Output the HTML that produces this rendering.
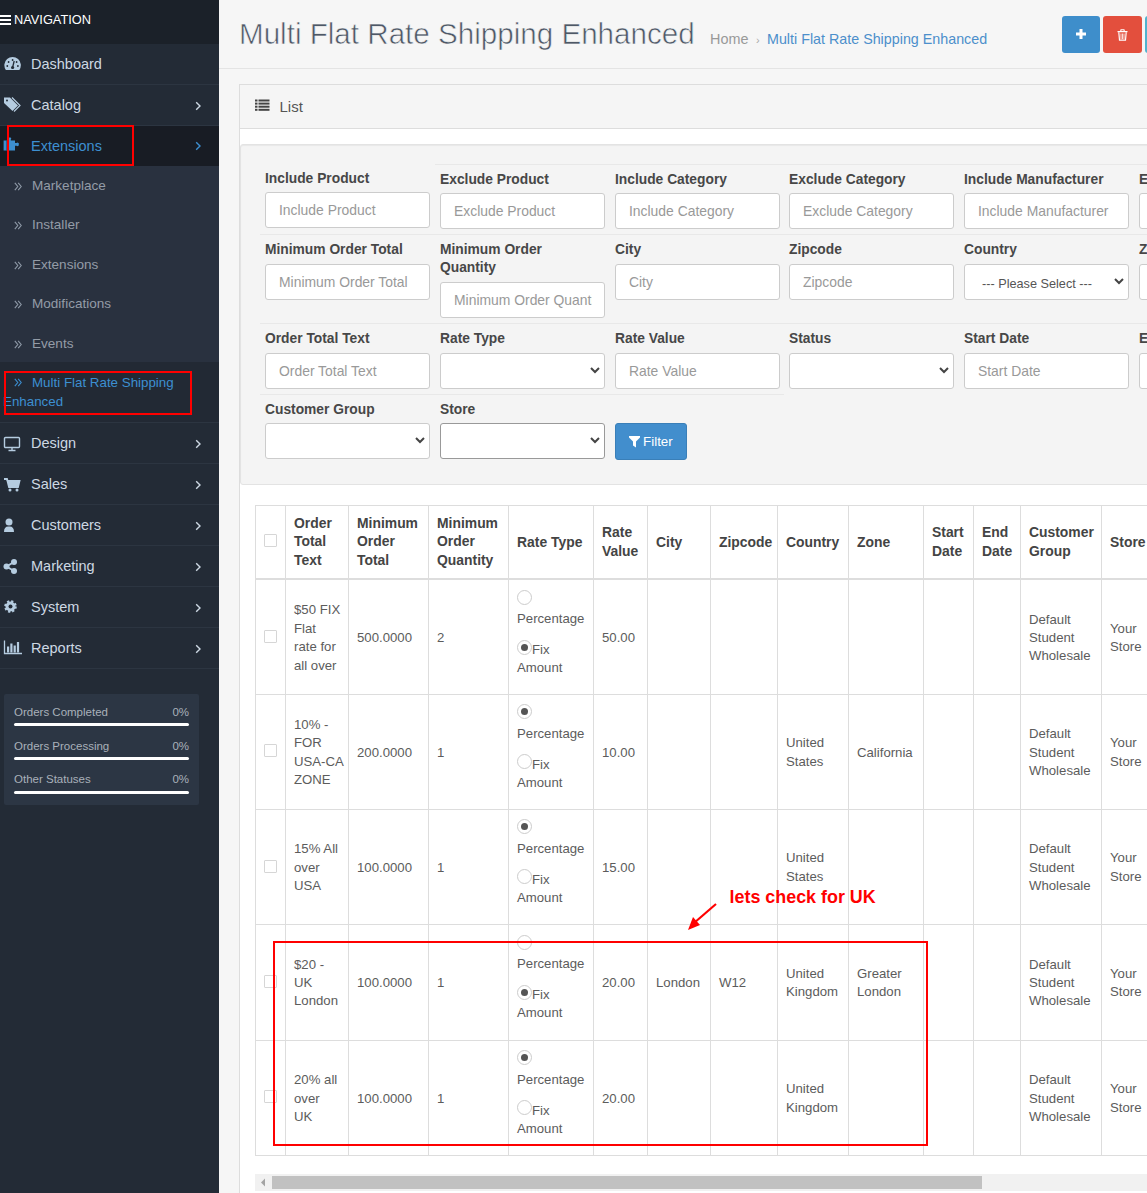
<!DOCTYPE html>
<html><head><meta charset="utf-8"><title>Multi Flat Rate Shipping Enhanced</title>
<style>
html,body{margin:0;padding:0;width:1147px;height:1193px;overflow:hidden;background:#f6f6f6;font-family:"Liberation Sans",sans-serif;}
.r{position:absolute;}
.t{position:absolute;white-space:nowrap;}
</style></head><body>
<div class="r" style="left:0px;top:0px;width:219px;height:1193px;background:#232b36"></div>
<div class="r" style="left:0px;top:0px;width:219px;height:44px;background:#1b2129"></div>
<div class="r" style="left:0px;top:15px;width:11px;height:2px;background:#fff"></div>
<div class="r" style="left:0px;top:19px;width:11px;height:2px;background:#fff"></div>
<div class="r" style="left:0px;top:23px;width:11px;height:2px;background:#fff"></div>
<div class="t" style="left:14px;top:11.10px;font-size:12.8px;line-height:17.92px;color:#fff;">NAVIGATION</div>
<div class="r" style="left:0px;top:84px;width:219px;height:1px;background:#2c3541"></div>
<div class="t" style="left:31px;top:54.33px;font-size:14.5px;line-height:20.3px;color:#cdd8e3;">Dashboard</div>
<svg class="r" style="left:3px;top:56px" width="20" height="17" viewBox="0 0 20 17"><path d="M2.25 14 A8.25 8.25 0 1 1 15.75 14 Z" transform="translate(0.6,0)" fill="#b5cce0"/><circle cx="9.6" cy="11.5" r="1.6" fill="#232b36"/><path d="M9.6 11.5 L11.2 5" stroke="#232b36" stroke-width="1.3"/><circle cx="4.3" cy="10" r="0.9" fill="#232b36"/><circle cx="5.6" cy="6" r="0.9" fill="#232b36"/><circle cx="9.6" cy="4" r="0.9" fill="#232b36"/><circle cx="14.9" cy="10" r="0.9" fill="#232b36"/><circle cx="13.6" cy="6" r="0.9" fill="#232b36"/></svg>
<div class="r" style="left:0px;top:125px;width:219px;height:1px;background:#2c3541"></div>
<div class="t" style="left:31px;top:95.33px;font-size:14.5px;line-height:20.3px;color:#cdd8e3;">Catalog</div>
<svg class="r" style="left:195px;top:101px" width="7" height="10" viewBox="0 0 7 10"><path d="M1.2 1.2 L5 5 L1.2 8.8" stroke="#cdd8e3" stroke-width="1.4" fill="none"/></svg>
<svg class="r" style="left:3px;top:97px" width="20" height="17" viewBox="0 0 20 17"><path d="M1 0.5 L7 0.5 L15 8.5 L9.5 14 L1 6 Z" fill="#b5cce0"/><path d="M9 0.5 L17 8.5 L11 14.5" stroke="#b5cce0" stroke-width="1.2" fill="none"/><circle cx="4" cy="3.5" r="1" fill="#232b36"/></svg>
<div class="r" style="left:0px;top:126px;width:219px;height:40px;background:#181c24"></div>
<div class="t" style="left:31px;top:136.33px;font-size:14.5px;line-height:20.3px;color:#3d8fd1;">Extensions</div>
<svg class="r" style="left:195px;top:141px" width="7" height="10" viewBox="0 0 7 10"><path d="M1.2 1.2 L5 5 L1.2 8.8" stroke="#3d8fd1" stroke-width="1.4" fill="none"/></svg>
<svg class="r" style="left:3px;top:137px" width="18" height="17" viewBox="0 0 18 17"><path d="M0.6 3.5 L6 3.5 L6 2.5 L5.5 1.5 L6.2 0.4 L7.6 0.4 L8.3 1.5 L7.8 2.5 L7.8 3.5 L12 3.5 L12 6 L13.5 6 L14.5 5.5 L15.8 6.2 L15.8 8.5 L14.5 9.2 L13.5 8.7 L12 8.7 L12 13.5 L0.6 13.5 Z" fill="#3d8fd1"/><path d="M4 3.5 L4 13.5" stroke="#1a1f27" stroke-width="0.8"/></svg>
<div class="r" style="left:0px;top:166px;width:219px;height:196px;background:#29313f"></div>
<svg class="r" style="left:14px;top:182px" width="9" height="9" viewBox="0 0 9 9"><path d="M0.8 0.8 L3.8 4.5 L0.8 8.2 M4.2 0.8 L7.2 4.5 L4.2 8.2" stroke="#8f9aa8" stroke-width="1.1" fill="none"/></svg>
<div class="t" style="left:32px;top:177.32px;font-size:13.55px;line-height:18.97px;color:#949ca7;">Marketplace</div>
<svg class="r" style="left:14px;top:221px" width="9" height="9" viewBox="0 0 9 9"><path d="M0.8 0.8 L3.8 4.5 L0.8 8.2 M4.2 0.8 L7.2 4.5 L4.2 8.2" stroke="#8f9aa8" stroke-width="1.1" fill="none"/></svg>
<div class="t" style="left:32px;top:216.32px;font-size:13.55px;line-height:18.97px;color:#949ca7;">Installer</div>
<svg class="r" style="left:14px;top:260.5px" width="9" height="9" viewBox="0 0 9 9"><path d="M0.8 0.8 L3.8 4.5 L0.8 8.2 M4.2 0.8 L7.2 4.5 L4.2 8.2" stroke="#8f9aa8" stroke-width="1.1" fill="none"/></svg>
<div class="t" style="left:32px;top:255.82px;font-size:13.55px;line-height:18.97px;color:#949ca7;">Extensions</div>
<svg class="r" style="left:14px;top:300px" width="9" height="9" viewBox="0 0 9 9"><path d="M0.8 0.8 L3.8 4.5 L0.8 8.2 M4.2 0.8 L7.2 4.5 L4.2 8.2" stroke="#8f9aa8" stroke-width="1.1" fill="none"/></svg>
<div class="t" style="left:32px;top:295.32px;font-size:13.55px;line-height:18.97px;color:#949ca7;">Modifications</div>
<svg class="r" style="left:14px;top:339.5px" width="9" height="9" viewBox="0 0 9 9"><path d="M0.8 0.8 L3.8 4.5 L0.8 8.2 M4.2 0.8 L7.2 4.5 L4.2 8.2" stroke="#8f9aa8" stroke-width="1.1" fill="none"/></svg>
<div class="t" style="left:32px;top:334.82px;font-size:13.55px;line-height:18.97px;color:#949ca7;">Events</div>
<div class="r" style="left:0px;top:362px;width:219px;height:61px;background:#222934"></div>
<svg class="r" style="left:14px;top:378px" width="9" height="9" viewBox="0 0 9 9"><path d="M0.8 0.8 L3.8 4.5 L0.8 8.2 M4.2 0.8 L7.2 4.5 L4.2 8.2" stroke="#3d8fd1" stroke-width="1.1" fill="none"/></svg>
<div class="t" style="left:32px;top:373.53px;font-size:13.35px;line-height:18.69px;color:#3d8fd1;">Multi Flat Rate Shipping</div>
<div class="t" style="left:3px;top:393.23px;font-size:13.35px;line-height:18.69px;color:#3d8fd1;">Enhanced</div>
<div class="r" style="left:0px;top:422px;width:219px;height:1px;background:#2c3541"></div>
<div class="r" style="left:0px;top:463px;width:219px;height:1px;background:#2c3541"></div>
<div class="t" style="left:31px;top:433.33px;font-size:14.5px;line-height:20.3px;color:#cdd8e3;">Design</div>
<svg class="r" style="left:195px;top:439px" width="7" height="10" viewBox="0 0 7 10"><path d="M1.2 1.2 L5 5 L1.2 8.8" stroke="#cdd8e3" stroke-width="1.4" fill="none"/></svg>
<svg class="r" style="left:3px;top:435px" width="20" height="17" viewBox="0 0 20 17"><rect x="1.5" y="2.5" width="15" height="10" rx="1" stroke="#b5cce0" stroke-width="1.4" fill="none"/><path d="M9 12.5 L9 15 M5.5 15.5 L12.5 15.5" stroke="#b5cce0" stroke-width="1.4"/></svg>
<div class="r" style="left:0px;top:504px;width:219px;height:1px;background:#2c3541"></div>
<div class="t" style="left:31px;top:474.33px;font-size:14.5px;line-height:20.3px;color:#cdd8e3;">Sales</div>
<svg class="r" style="left:195px;top:480px" width="7" height="10" viewBox="0 0 7 10"><path d="M1.2 1.2 L5 5 L1.2 8.8" stroke="#cdd8e3" stroke-width="1.4" fill="none"/></svg>
<svg class="r" style="left:3px;top:476px" width="20" height="17" viewBox="0 0 20 17"><path d="M1 3 L4 3 L6 11 L15 11 L16.5 5 L5 5" stroke="#b5cce0" stroke-width="1.8" fill="#b5cce0"/><circle cx="7" cy="14" r="1.5" fill="#b5cce0"/><circle cx="14" cy="14" r="1.5" fill="#b5cce0"/></svg>
<div class="r" style="left:0px;top:545px;width:219px;height:1px;background:#2c3541"></div>
<div class="t" style="left:31px;top:515.33px;font-size:14.5px;line-height:20.3px;color:#cdd8e3;">Customers</div>
<svg class="r" style="left:195px;top:521px" width="7" height="10" viewBox="0 0 7 10"><path d="M1.2 1.2 L5 5 L1.2 8.8" stroke="#cdd8e3" stroke-width="1.4" fill="none"/></svg>
<svg class="r" style="left:3px;top:517px" width="20" height="17" viewBox="0 0 20 17"><circle cx="6" cy="5" r="3.5" fill="#b5cce0"/><path d="M1 15 Q1 9 6 9.5 Q11 9 11 15 Z" fill="#b5cce0"/></svg>
<div class="r" style="left:0px;top:586px;width:219px;height:1px;background:#2c3541"></div>
<div class="t" style="left:31px;top:556.33px;font-size:14.5px;line-height:20.3px;color:#cdd8e3;">Marketing</div>
<svg class="r" style="left:195px;top:562px" width="7" height="10" viewBox="0 0 7 10"><path d="M1.2 1.2 L5 5 L1.2 8.8" stroke="#cdd8e3" stroke-width="1.4" fill="none"/></svg>
<svg class="r" style="left:3px;top:558px" width="20" height="17" viewBox="0 0 20 17"><circle cx="3.5" cy="8.5" r="3" fill="#b5cce0"/><circle cx="11" cy="4" r="3" fill="#b5cce0"/><circle cx="11" cy="13" r="3" fill="#b5cce0"/><path d="M3.5 8.5 L11 4 M3.5 8.5 L11 13" stroke="#b5cce0" stroke-width="2"/></svg>
<div class="r" style="left:0px;top:627px;width:219px;height:1px;background:#2c3541"></div>
<div class="t" style="left:31px;top:597.33px;font-size:14.5px;line-height:20.3px;color:#cdd8e3;">System</div>
<svg class="r" style="left:195px;top:603px" width="7" height="10" viewBox="0 0 7 10"><path d="M1.2 1.2 L5 5 L1.2 8.8" stroke="#cdd8e3" stroke-width="1.4" fill="none"/></svg>
<svg class="r" style="left:3px;top:599px" width="20" height="17" viewBox="0 0 20 17"><circle cx="7.5" cy="7.5" r="5" fill="#b5cce0" stroke="#b5cce0" stroke-width="2.6" stroke-dasharray="2.1 1.83"/><circle cx="7.5" cy="7.5" r="2" fill="#232b36"/></svg>
<div class="r" style="left:0px;top:668px;width:219px;height:1px;background:#2c3541"></div>
<div class="t" style="left:31px;top:638.33px;font-size:14.5px;line-height:20.3px;color:#cdd8e3;">Reports</div>
<svg class="r" style="left:195px;top:644px" width="7" height="10" viewBox="0 0 7 10"><path d="M1.2 1.2 L5 5 L1.2 8.8" stroke="#cdd8e3" stroke-width="1.4" fill="none"/></svg>
<svg class="r" style="left:3px;top:640px" width="20" height="17" viewBox="0 0 20 17"><path d="M1.5 0.5 L1.5 13.5 L19 13.5" stroke="#b5cce0" stroke-width="1.3" fill="none"/><rect x="4" y="6.5" width="2.2" height="6" fill="#b5cce0"/><rect x="7.3" y="3.5" width="2.2" height="9" fill="#b5cce0"/><rect x="10.6" y="5.5" width="2.2" height="7" fill="#b5cce0"/><rect x="13.9" y="2" width="2.2" height="10.5" fill="#b5cce0"/></svg>
<div class="r" style="left:4px;top:694px;width:195px;height:111px;background:#2c3644;border-radius:2px"></div>
<div class="t" style="left:14px;top:704.47px;font-size:11.5px;line-height:16.1px;color:#a9b1ba;">Orders Completed</div>
<div class="t" style="left:189px;top:704.47px;font-size:11.5px;line-height:16.1px;color:#a9b1ba;transform:translateX(-100%);">0%</div>
<div class="r" style="left:14px;top:723px;width:175px;height:3px;background:#fff;border-radius:2px"></div>
<div class="t" style="left:14px;top:737.97px;font-size:11.5px;line-height:16.1px;color:#a9b1ba;">Orders Processing</div>
<div class="t" style="left:189px;top:737.97px;font-size:11.5px;line-height:16.1px;color:#a9b1ba;transform:translateX(-100%);">0%</div>
<div class="r" style="left:14px;top:757px;width:175px;height:3px;background:#fff;border-radius:2px"></div>
<div class="t" style="left:14px;top:771.47px;font-size:11.5px;line-height:16.1px;color:#a9b1ba;">Other Statuses</div>
<div class="t" style="left:189px;top:771.47px;font-size:11.5px;line-height:16.1px;color:#a9b1ba;transform:translateX(-100%);">0%</div>
<div class="r" style="left:14px;top:791px;width:175px;height:3px;background:#fff;border-radius:2px"></div>
<div class="r" style="left:219px;top:0px;width:928px;height:1193px;background:#f6f6f6"></div>
<div class="r" style="left:219px;top:68px;width:928px;height:1px;background:#e4e4e4"></div>
<div class="t" style="left:239px;top:12.72px;font-size:29.6px;line-height:41.44px;color:#4e5866;-webkit-text-stroke:0.6px #f6f6f6;">Multi Flat Rate Shipping Enhanced</div>
<div class="t" style="left:710px;top:29.03px;font-size:14.4px;line-height:20.16px;color:#999;">Home</div>
<div class="t" style="left:756px;top:33.49px;font-size:11px;line-height:15.4px;color:#aaa;">&rsaquo;</div>
<div class="t" style="left:767px;top:29.14px;font-size:14.3px;line-height:20.02px;color:#4c8fcb;">Multi Flat Rate Shipping Enhanced</div>
<div class="r" style="left:1062px;top:16px;width:38px;height:37px;background:#3e8ecb;border-radius:3px"></div>
<svg class="r" style="left:1074px;top:27px" width="14" height="14" viewBox="0 0 14 14"><path d="M7 2 L7 12 M2 7 L12 7" stroke="#fff" stroke-width="3"/></svg>
<div class="r" style="left:1103px;top:16px;width:39px;height:37px;background:#e34f3d;border-radius:3px"></div>
<svg class="r" style="left:1117px;top:28.5px" width="11" height="12" viewBox="0 0 11 12"><path d="M0.5 2.6 L10.5 2.6 M3.6 2.6 L4 0.8 L7 0.8 L7.4 2.6" stroke="#fff" stroke-width="1.1" fill="none"/><path d="M1.8 3.2 L2.5 11.2 L8.5 11.2 L9.2 3.2" stroke="#fff" stroke-width="1.2" fill="none"/><path d="M4 4.5 L4 10 M5.5 4.5 L5.5 10 M7 4.5 L7 10" stroke="#fff" stroke-width="0.8"/></svg>
<div class="r" style="left:1145px;top:16px;width:10px;height:37px;background:#4fb3cf;border-radius:3px"></div>
<div class="r" style="left:239px;top:84px;width:908px;height:1109px;background:#fff;border-left:1px solid #ddd;border-top:1px solid #ddd;box-sizing:border-box"></div>
<div class="r" style="left:240px;top:85px;width:907px;height:43px;background:#f5f5f5;border-bottom:1px solid #ddd"></div>
<svg class="r" style="left:255px;top:99px" width="15" height="13" viewBox="0 0 15 13"><g fill="#444"><rect x="0" y="0.5" width="2.5" height="2"/><rect x="3.5" y="0.5" width="11" height="2"/><rect x="0" y="3.6" width="2.5" height="2"/><rect x="3.5" y="3.6" width="11" height="2"/><rect x="0" y="6.7" width="2.5" height="2"/><rect x="3.5" y="6.7" width="11" height="2"/><rect x="0" y="9.8" width="2.5" height="2"/><rect x="3.5" y="9.8" width="11" height="2"/></g></svg>
<div class="t" style="left:279.5px;top:95.80px;font-size:15px;line-height:21.0px;color:#555;">List</div>
<div class="r" style="left:240px;top:144px;width:917px;height:341px;background:#f4f4f4;border:1px solid #e3e3e3;border-radius:3px;box-shadow:inset 0 1px 1px rgba(0,0,0,.05);box-sizing:border-box"></div>
<div class="r" style="left:435px;top:164px;width:712px;height:1px;background:#e8e8e8"></div>
<div class="r" style="left:260px;top:234px;width:887px;height:1px;background:#e8e8e8"></div>
<div class="r" style="left:260px;top:323px;width:887px;height:1px;background:#e8e8e8"></div>
<div class="r" style="left:260px;top:394px;width:524px;height:1px;background:#e8e8e8"></div>
<div class="t" style="left:265px;top:169.06px;font-size:13.8px;line-height:19.32px;color:#474747;font-weight:bold;">Include Product</div>
<div class="r" style="left:265px;top:192px;width:165px;height:36px;background:#fff;border:1px solid #ccc;border-radius:3px;box-sizing:border-box"></div>
<div class="r" style="left:266px;top:192px;width:151px;height:36px;overflow:hidden"></div>
<div class="t" style="left:279px;top:200.95px;font-size:13.9px;line-height:19.46px;color:#999;width:138px;overflow:hidden;">Include Product</div>
<div class="t" style="left:440px;top:170.06px;font-size:13.8px;line-height:19.32px;color:#474747;font-weight:bold;">Exclude Product</div>
<div class="r" style="left:440px;top:193px;width:165px;height:36px;background:#fff;border:1px solid #ccc;border-radius:3px;box-sizing:border-box"></div>
<div class="r" style="left:441px;top:193px;width:151px;height:36px;overflow:hidden"></div>
<div class="t" style="left:454px;top:201.95px;font-size:13.9px;line-height:19.46px;color:#999;width:138px;overflow:hidden;">Exclude Product</div>
<div class="t" style="left:615px;top:170.06px;font-size:13.8px;line-height:19.32px;color:#474747;font-weight:bold;">Include Category</div>
<div class="r" style="left:615px;top:193px;width:165px;height:36px;background:#fff;border:1px solid #ccc;border-radius:3px;box-sizing:border-box"></div>
<div class="r" style="left:616px;top:193px;width:151px;height:36px;overflow:hidden"></div>
<div class="t" style="left:629px;top:201.95px;font-size:13.9px;line-height:19.46px;color:#999;width:138px;overflow:hidden;">Include Category</div>
<div class="t" style="left:789px;top:170.06px;font-size:13.8px;line-height:19.32px;color:#474747;font-weight:bold;">Exclude Category</div>
<div class="r" style="left:789px;top:193px;width:165px;height:36px;background:#fff;border:1px solid #ccc;border-radius:3px;box-sizing:border-box"></div>
<div class="r" style="left:790px;top:193px;width:151px;height:36px;overflow:hidden"></div>
<div class="t" style="left:803px;top:201.95px;font-size:13.9px;line-height:19.46px;color:#999;width:138px;overflow:hidden;">Exclude Category</div>
<div class="t" style="left:964px;top:170.06px;font-size:13.8px;line-height:19.32px;color:#474747;font-weight:bold;">Include Manufacturer</div>
<div class="r" style="left:964px;top:193px;width:165px;height:36px;background:#fff;border:1px solid #ccc;border-radius:3px;box-sizing:border-box"></div>
<div class="r" style="left:965px;top:193px;width:151px;height:36px;overflow:hidden"></div>
<div class="t" style="left:978px;top:201.95px;font-size:13.9px;line-height:19.46px;color:#999;width:138px;overflow:hidden;">Include Manufacturer</div>
<div class="t" style="left:1139px;top:170.06px;font-size:13.8px;line-height:19.32px;color:#474747;font-weight:bold;">Exclude Manufacturer</div>
<div class="r" style="left:1139px;top:193px;width:165px;height:36px;background:#fff;border:1px solid #ccc;border-radius:3px;box-sizing:border-box"></div>
<div class="r" style="left:1140px;top:193px;width:151px;height:36px;overflow:hidden"></div>
<div class="t" style="left:1153px;top:201.95px;font-size:13.9px;line-height:19.46px;color:#999;width:138px;overflow:hidden;">Exclude Manufacturer</div>
<div class="t" style="left:265px;top:240.36px;font-size:13.8px;line-height:19.32px;color:#474747;font-weight:bold;">Minimum Order Total</div>
<div class="r" style="left:265px;top:264px;width:165px;height:36px;background:#fff;border:1px solid #ccc;border-radius:3px;box-sizing:border-box"></div>
<div class="r" style="left:266px;top:264px;width:151px;height:36px;overflow:hidden"></div>
<div class="t" style="left:279px;top:272.95px;font-size:13.9px;line-height:19.46px;color:#999;width:138px;overflow:hidden;">Minimum Order Total</div>
<div class="t" style="left:440px;top:239.56px;font-size:13.8px;line-height:19.32px;color:#474747;font-weight:bold;">Minimum Order</div>
<div class="t" style="left:440px;top:258.46px;font-size:13.8px;line-height:19.32px;color:#474747;font-weight:bold;">Quantity</div>
<div class="r" style="left:440px;top:282px;width:165px;height:36px;background:#fff;border:1px solid #ccc;border-radius:3px;box-sizing:border-box"></div>
<div class="r" style="left:441px;top:282px;width:151px;height:36px;overflow:hidden"></div>
<div class="t" style="left:454px;top:290.95px;font-size:13.9px;line-height:19.46px;color:#999;width:138px;overflow:hidden;">Minimum Order Quantity</div>
<div class="t" style="left:615px;top:240.06px;font-size:13.8px;line-height:19.32px;color:#474747;font-weight:bold;">City</div>
<div class="r" style="left:615px;top:264px;width:165px;height:36px;background:#fff;border:1px solid #ccc;border-radius:3px;box-sizing:border-box"></div>
<div class="r" style="left:616px;top:264px;width:151px;height:36px;overflow:hidden"></div>
<div class="t" style="left:629px;top:272.95px;font-size:13.9px;line-height:19.46px;color:#999;width:138px;overflow:hidden;">City</div>
<div class="t" style="left:789px;top:240.06px;font-size:13.8px;line-height:19.32px;color:#474747;font-weight:bold;">Zipcode</div>
<div class="r" style="left:789px;top:264px;width:165px;height:36px;background:#fff;border:1px solid #ccc;border-radius:3px;box-sizing:border-box"></div>
<div class="r" style="left:790px;top:264px;width:151px;height:36px;overflow:hidden"></div>
<div class="t" style="left:803px;top:272.95px;font-size:13.9px;line-height:19.46px;color:#999;width:138px;overflow:hidden;">Zipcode</div>
<div class="t" style="left:964px;top:240.06px;font-size:13.8px;line-height:19.32px;color:#474747;font-weight:bold;">Country</div>
<div class="r" style="left:964px;top:264px;width:165px;height:36px;background:#fff;border:1px solid #ccc;border-radius:3px;box-sizing:border-box"></div>
<svg class="r" style="left:1114px;top:278px" width="10" height="7" viewBox="0 0 10 7"><path d="M1 1 L5 5 L9 1" stroke="#444" stroke-width="2" fill="none"/></svg>
<div class="t" style="left:982px;top:275.71px;font-size:12.7px;line-height:17.78px;color:#555;">--- Please Select ---</div>
<div class="t" style="left:1139px;top:240.06px;font-size:13.8px;line-height:19.32px;color:#474747;font-weight:bold;">Zone</div>
<div class="r" style="left:1139px;top:264px;width:165px;height:36px;background:#fff;border:1px solid #ccc;border-radius:3px;box-sizing:border-box"></div>
<svg class="r" style="left:1289px;top:278px" width="10" height="7" viewBox="0 0 10 7"><path d="M1 1 L5 5 L9 1" stroke="#444" stroke-width="2" fill="none"/></svg>
<div class="t" style="left:265px;top:328.76px;font-size:13.8px;line-height:19.32px;color:#474747;font-weight:bold;">Order Total Text</div>
<div class="r" style="left:265px;top:353px;width:165px;height:36px;background:#fff;border:1px solid #ccc;border-radius:3px;box-sizing:border-box"></div>
<div class="r" style="left:266px;top:353px;width:151px;height:36px;overflow:hidden"></div>
<div class="t" style="left:279px;top:361.95px;font-size:13.9px;line-height:19.46px;color:#999;width:138px;overflow:hidden;">Order Total Text</div>
<div class="t" style="left:440px;top:328.76px;font-size:13.8px;line-height:19.32px;color:#474747;font-weight:bold;">Rate Type</div>
<div class="r" style="left:440px;top:353px;width:165px;height:36px;background:#fff;border:1px solid #ccc;border-radius:3px;box-sizing:border-box"></div>
<svg class="r" style="left:590px;top:367px" width="10" height="7" viewBox="0 0 10 7"><path d="M1 1 L5 5 L9 1" stroke="#444" stroke-width="2" fill="none"/></svg>
<div class="t" style="left:615px;top:328.76px;font-size:13.8px;line-height:19.32px;color:#474747;font-weight:bold;">Rate Value</div>
<div class="r" style="left:615px;top:353px;width:165px;height:36px;background:#fff;border:1px solid #ccc;border-radius:3px;box-sizing:border-box"></div>
<div class="r" style="left:616px;top:353px;width:151px;height:36px;overflow:hidden"></div>
<div class="t" style="left:629px;top:361.95px;font-size:13.9px;line-height:19.46px;color:#999;width:138px;overflow:hidden;">Rate Value</div>
<div class="t" style="left:789px;top:328.76px;font-size:13.8px;line-height:19.32px;color:#474747;font-weight:bold;">Status</div>
<div class="r" style="left:789px;top:353px;width:165px;height:36px;background:#fff;border:1px solid #ccc;border-radius:3px;box-sizing:border-box"></div>
<svg class="r" style="left:939px;top:367px" width="10" height="7" viewBox="0 0 10 7"><path d="M1 1 L5 5 L9 1" stroke="#444" stroke-width="2" fill="none"/></svg>
<div class="t" style="left:964px;top:328.76px;font-size:13.8px;line-height:19.32px;color:#474747;font-weight:bold;">Start Date</div>
<div class="r" style="left:964px;top:353px;width:165px;height:36px;background:#fff;border:1px solid #ccc;border-radius:3px;box-sizing:border-box"></div>
<div class="r" style="left:965px;top:353px;width:151px;height:36px;overflow:hidden"></div>
<div class="t" style="left:978px;top:361.95px;font-size:13.9px;line-height:19.46px;color:#999;width:138px;overflow:hidden;">Start Date</div>
<div class="t" style="left:1139px;top:328.76px;font-size:13.8px;line-height:19.32px;color:#474747;font-weight:bold;">End Date</div>
<div class="r" style="left:1139px;top:353px;width:165px;height:36px;background:#fff;border:1px solid #ccc;border-radius:3px;box-sizing:border-box"></div>
<div class="r" style="left:1140px;top:353px;width:151px;height:36px;overflow:hidden"></div>
<div class="t" style="left:1153px;top:361.95px;font-size:13.9px;line-height:19.46px;color:#999;width:138px;overflow:hidden;">End Date</div>
<div class="t" style="left:265px;top:400.26px;font-size:13.8px;line-height:19.32px;color:#474747;font-weight:bold;">Customer Group</div>
<div class="r" style="left:265px;top:423px;width:165px;height:36px;background:#fff;border:1px solid #ccc;border-radius:3px;box-sizing:border-box"></div>
<svg class="r" style="left:415px;top:437px" width="10" height="7" viewBox="0 0 10 7"><path d="M1 1 L5 5 L9 1" stroke="#444" stroke-width="2" fill="none"/></svg>
<div class="t" style="left:440px;top:400.26px;font-size:13.8px;line-height:19.32px;color:#474747;font-weight:bold;">Store</div>
<div class="r" style="left:440px;top:423px;width:165px;height:36px;background:#fff;border:1px solid #999;border-radius:3px;box-sizing:border-box"></div>
<svg class="r" style="left:590px;top:437px" width="10" height="7" viewBox="0 0 10 7"><path d="M1 1 L5 5 L9 1" stroke="#444" stroke-width="2" fill="none"/></svg>
<div class="r" style="left:615px;top:423px;width:72px;height:37px;background:#428ecd;border:1px solid #3a7fb8;border-radius:3px;box-sizing:border-box"></div>
<svg class="r" style="left:629px;top:436px" width="11" height="12" viewBox="0 0 11 12"><path d="M0 0 L11 0 L11 1.5 L7 5.5 L7 11.5 L4 9.5 L4 5.5 L0 1.5 Z" fill="#fff"/></svg>
<div class="t" style="left:643px;top:432.58px;font-size:13.4px;line-height:18.76px;color:#fff;">Filter</div>
<div class="r" style="left:255px;top:505px;width:1px;height:651px;background:#ddd"></div>
<div class="r" style="left:285px;top:505px;width:1px;height:651px;background:#ddd"></div>
<div class="r" style="left:348px;top:505px;width:1px;height:651px;background:#ddd"></div>
<div class="r" style="left:428px;top:505px;width:1px;height:651px;background:#ddd"></div>
<div class="r" style="left:508px;top:505px;width:1px;height:651px;background:#ddd"></div>
<div class="r" style="left:593px;top:505px;width:1px;height:651px;background:#ddd"></div>
<div class="r" style="left:647px;top:505px;width:1px;height:651px;background:#ddd"></div>
<div class="r" style="left:710px;top:505px;width:1px;height:651px;background:#ddd"></div>
<div class="r" style="left:777px;top:505px;width:1px;height:651px;background:#ddd"></div>
<div class="r" style="left:848px;top:505px;width:1px;height:651px;background:#ddd"></div>
<div class="r" style="left:923px;top:505px;width:1px;height:651px;background:#ddd"></div>
<div class="r" style="left:973px;top:505px;width:1px;height:651px;background:#ddd"></div>
<div class="r" style="left:1020px;top:505px;width:1px;height:651px;background:#ddd"></div>
<div class="r" style="left:1101px;top:505px;width:1px;height:651px;background:#ddd"></div>
<div class="r" style="left:255px;top:505px;width:892px;height:1px;background:#ddd"></div>
<div class="r" style="left:255px;top:578px;width:892px;height:2px;background:#ddd"></div>
<div class="r" style="left:255px;top:694px;width:892px;height:1px;background:#ddd"></div>
<div class="r" style="left:255px;top:809px;width:892px;height:1px;background:#ddd"></div>
<div class="r" style="left:255px;top:924px;width:892px;height:1px;background:#ddd"></div>
<div class="r" style="left:255px;top:1040px;width:892px;height:1px;background:#ddd"></div>
<div class="r" style="left:255px;top:1155px;width:892px;height:1px;background:#ddd"></div>
<div class="r" style="left:264px;top:534px;width:13px;height:13px;background:#fff;border:1px solid #d6d6d6;box-sizing:border-box;border-radius:1px"></div>
<div class="t" style="left:294px;top:513.95px;font-size:13.9px;line-height:19.46px;color:#444;font-weight:bold;">Order</div>
<div class="t" style="left:294px;top:532.45px;font-size:13.9px;line-height:19.46px;color:#444;font-weight:bold;">Total</div>
<div class="t" style="left:294px;top:550.95px;font-size:13.9px;line-height:19.46px;color:#444;font-weight:bold;">Text</div>
<div class="t" style="left:357px;top:513.95px;font-size:13.9px;line-height:19.46px;color:#444;font-weight:bold;">Minimum</div>
<div class="t" style="left:357px;top:532.45px;font-size:13.9px;line-height:19.46px;color:#444;font-weight:bold;">Order</div>
<div class="t" style="left:357px;top:550.95px;font-size:13.9px;line-height:19.46px;color:#444;font-weight:bold;">Total</div>
<div class="t" style="left:437px;top:513.95px;font-size:13.9px;line-height:19.46px;color:#444;font-weight:bold;">Minimum</div>
<div class="t" style="left:437px;top:532.45px;font-size:13.9px;line-height:19.46px;color:#444;font-weight:bold;">Order</div>
<div class="t" style="left:437px;top:550.95px;font-size:13.9px;line-height:19.46px;color:#444;font-weight:bold;">Quantity</div>
<div class="t" style="left:517px;top:532.95px;font-size:13.9px;line-height:19.46px;color:#444;font-weight:bold;">Rate Type</div>
<div class="t" style="left:602px;top:523.45px;font-size:13.9px;line-height:19.46px;color:#444;font-weight:bold;">Rate</div>
<div class="t" style="left:602px;top:541.95px;font-size:13.9px;line-height:19.46px;color:#444;font-weight:bold;">Value</div>
<div class="t" style="left:656px;top:532.95px;font-size:13.9px;line-height:19.46px;color:#444;font-weight:bold;">City</div>
<div class="t" style="left:719px;top:532.95px;font-size:13.9px;line-height:19.46px;color:#444;font-weight:bold;">Zipcode</div>
<div class="t" style="left:786px;top:532.95px;font-size:13.9px;line-height:19.46px;color:#444;font-weight:bold;">Country</div>
<div class="t" style="left:857px;top:532.95px;font-size:13.9px;line-height:19.46px;color:#444;font-weight:bold;">Zone</div>
<div class="t" style="left:932px;top:523.45px;font-size:13.9px;line-height:19.46px;color:#444;font-weight:bold;">Start</div>
<div class="t" style="left:932px;top:541.95px;font-size:13.9px;line-height:19.46px;color:#444;font-weight:bold;">Date</div>
<div class="t" style="left:982px;top:523.45px;font-size:13.9px;line-height:19.46px;color:#444;font-weight:bold;">End</div>
<div class="t" style="left:982px;top:541.95px;font-size:13.9px;line-height:19.46px;color:#444;font-weight:bold;">Date</div>
<div class="t" style="left:1029px;top:523.45px;font-size:13.9px;line-height:19.46px;color:#444;font-weight:bold;">Customer</div>
<div class="t" style="left:1029px;top:541.95px;font-size:13.9px;line-height:19.46px;color:#444;font-weight:bold;">Group</div>
<div class="t" style="left:1110px;top:532.95px;font-size:13.9px;line-height:19.46px;color:#444;font-weight:bold;">Store</div>
<div class="r" style="left:264px;top:630px;width:13px;height:13px;background:#fff;border:1px solid #d6d6d6;box-sizing:border-box;border-radius:1px"></div>
<div class="t" style="left:294px;top:601.49px;font-size:13.2px;line-height:18.48px;color:#5c5c5c;">$50 FIX</div>
<div class="t" style="left:294px;top:619.89px;font-size:13.2px;line-height:18.48px;color:#5c5c5c;">Flat</div>
<div class="t" style="left:294px;top:638.29px;font-size:13.2px;line-height:18.48px;color:#5c5c5c;">rate for</div>
<div class="t" style="left:294px;top:656.69px;font-size:13.2px;line-height:18.48px;color:#5c5c5c;">all over</div>
<div class="t" style="left:357px;top:629.09px;font-size:13.2px;line-height:18.48px;color:#5c5c5c;">500.0000</div>
<div class="t" style="left:437px;top:629.09px;font-size:13.2px;line-height:18.48px;color:#5c5c5c;">2</div>
<div class="r" style="left:517px;top:589.9px;width:15px;height:15px;border:1px solid #ccc;border-radius:50%;box-sizing:border-box;background:#fff"></div>
<div class="t" style="left:517px;top:610.09px;font-size:13.2px;line-height:18.48px;color:#5c5c5c;">Percentage</div>
<div class="r" style="left:517px;top:639.7px;width:15px;height:15px;border:1px solid #ccc;border-radius:50%;box-sizing:border-box;background:#fff"></div>
<div class="r" style="left:521px;top:643.7px;width:7px;height:7px;border-radius:50%;background:#555"></div>
<div class="t" style="left:532px;top:641.09px;font-size:13.2px;line-height:18.48px;color:#5c5c5c;">Fix</div>
<div class="t" style="left:517px;top:659.39px;font-size:13.2px;line-height:18.48px;color:#5c5c5c;">Amount</div>
<div class="t" style="left:602px;top:629.09px;font-size:13.2px;line-height:18.48px;color:#5c5c5c;">50.00</div>
<div class="t" style="left:1029px;top:610.69px;font-size:13.2px;line-height:18.48px;color:#5c5c5c;">Default</div>
<div class="t" style="left:1029px;top:629.09px;font-size:13.2px;line-height:18.48px;color:#5c5c5c;">Student</div>
<div class="t" style="left:1029px;top:647.49px;font-size:13.2px;line-height:18.48px;color:#5c5c5c;">Wholesale</div>
<div class="t" style="left:1110px;top:619.89px;font-size:13.2px;line-height:18.48px;color:#5c5c5c;">Your</div>
<div class="t" style="left:1110px;top:638.29px;font-size:13.2px;line-height:18.48px;color:#5c5c5c;">Store</div>
<div class="r" style="left:264px;top:744px;width:13px;height:13px;background:#fff;border:1px solid #d6d6d6;box-sizing:border-box;border-radius:1px"></div>
<div class="t" style="left:294px;top:715.99px;font-size:13.2px;line-height:18.48px;color:#5c5c5c;">10% -</div>
<div class="t" style="left:294px;top:734.39px;font-size:13.2px;line-height:18.48px;color:#5c5c5c;">FOR</div>
<div class="t" style="left:294px;top:752.79px;font-size:13.2px;line-height:18.48px;color:#5c5c5c;">USA-CA</div>
<div class="t" style="left:294px;top:771.19px;font-size:13.2px;line-height:18.48px;color:#5c5c5c;">ZONE</div>
<div class="t" style="left:357px;top:743.59px;font-size:13.2px;line-height:18.48px;color:#5c5c5c;">200.0000</div>
<div class="t" style="left:437px;top:743.59px;font-size:13.2px;line-height:18.48px;color:#5c5c5c;">1</div>
<div class="r" style="left:517px;top:704.4px;width:15px;height:15px;border:1px solid #ccc;border-radius:50%;box-sizing:border-box;background:#fff"></div>
<div class="r" style="left:521px;top:708.4px;width:7px;height:7px;border-radius:50%;background:#555"></div>
<div class="t" style="left:517px;top:724.59px;font-size:13.2px;line-height:18.48px;color:#5c5c5c;">Percentage</div>
<div class="r" style="left:517px;top:754.2px;width:15px;height:15px;border:1px solid #ccc;border-radius:50%;box-sizing:border-box;background:#fff"></div>
<div class="t" style="left:532px;top:755.59px;font-size:13.2px;line-height:18.48px;color:#5c5c5c;">Fix</div>
<div class="t" style="left:517px;top:773.89px;font-size:13.2px;line-height:18.48px;color:#5c5c5c;">Amount</div>
<div class="t" style="left:602px;top:743.59px;font-size:13.2px;line-height:18.48px;color:#5c5c5c;">10.00</div>
<div class="t" style="left:786px;top:734.39px;font-size:13.2px;line-height:18.48px;color:#5c5c5c;">United</div>
<div class="t" style="left:786px;top:752.79px;font-size:13.2px;line-height:18.48px;color:#5c5c5c;">States</div>
<div class="t" style="left:857px;top:743.59px;font-size:13.2px;line-height:18.48px;color:#5c5c5c;">California</div>
<div class="t" style="left:1029px;top:725.19px;font-size:13.2px;line-height:18.48px;color:#5c5c5c;">Default</div>
<div class="t" style="left:1029px;top:743.59px;font-size:13.2px;line-height:18.48px;color:#5c5c5c;">Student</div>
<div class="t" style="left:1029px;top:761.99px;font-size:13.2px;line-height:18.48px;color:#5c5c5c;">Wholesale</div>
<div class="t" style="left:1110px;top:734.39px;font-size:13.2px;line-height:18.48px;color:#5c5c5c;">Your</div>
<div class="t" style="left:1110px;top:752.79px;font-size:13.2px;line-height:18.48px;color:#5c5c5c;">Store</div>
<div class="r" style="left:264px;top:860px;width:13px;height:13px;background:#fff;border:1px solid #d6d6d6;box-sizing:border-box;border-radius:1px"></div>
<div class="t" style="left:294px;top:840.19px;font-size:13.2px;line-height:18.48px;color:#5c5c5c;">15% All</div>
<div class="t" style="left:294px;top:858.59px;font-size:13.2px;line-height:18.48px;color:#5c5c5c;">over</div>
<div class="t" style="left:294px;top:876.99px;font-size:13.2px;line-height:18.48px;color:#5c5c5c;">USA</div>
<div class="t" style="left:357px;top:858.59px;font-size:13.2px;line-height:18.48px;color:#5c5c5c;">100.0000</div>
<div class="t" style="left:437px;top:858.59px;font-size:13.2px;line-height:18.48px;color:#5c5c5c;">1</div>
<div class="r" style="left:517px;top:819.4px;width:15px;height:15px;border:1px solid #ccc;border-radius:50%;box-sizing:border-box;background:#fff"></div>
<div class="r" style="left:521px;top:823.4px;width:7px;height:7px;border-radius:50%;background:#555"></div>
<div class="t" style="left:517px;top:839.59px;font-size:13.2px;line-height:18.48px;color:#5c5c5c;">Percentage</div>
<div class="r" style="left:517px;top:869.2px;width:15px;height:15px;border:1px solid #ccc;border-radius:50%;box-sizing:border-box;background:#fff"></div>
<div class="t" style="left:532px;top:870.59px;font-size:13.2px;line-height:18.48px;color:#5c5c5c;">Fix</div>
<div class="t" style="left:517px;top:888.89px;font-size:13.2px;line-height:18.48px;color:#5c5c5c;">Amount</div>
<div class="t" style="left:602px;top:858.59px;font-size:13.2px;line-height:18.48px;color:#5c5c5c;">15.00</div>
<div class="t" style="left:786px;top:849.39px;font-size:13.2px;line-height:18.48px;color:#5c5c5c;">United</div>
<div class="t" style="left:786px;top:867.79px;font-size:13.2px;line-height:18.48px;color:#5c5c5c;">States</div>
<div class="t" style="left:1029px;top:840.19px;font-size:13.2px;line-height:18.48px;color:#5c5c5c;">Default</div>
<div class="t" style="left:1029px;top:858.59px;font-size:13.2px;line-height:18.48px;color:#5c5c5c;">Student</div>
<div class="t" style="left:1029px;top:876.99px;font-size:13.2px;line-height:18.48px;color:#5c5c5c;">Wholesale</div>
<div class="t" style="left:1110px;top:849.39px;font-size:13.2px;line-height:18.48px;color:#5c5c5c;">Your</div>
<div class="t" style="left:1110px;top:867.79px;font-size:13.2px;line-height:18.48px;color:#5c5c5c;">Store</div>
<div class="r" style="left:264px;top:975px;width:13px;height:13px;background:#fff;border:1px solid #d6d6d6;box-sizing:border-box;border-radius:1px"></div>
<div class="t" style="left:294px;top:955.69px;font-size:13.2px;line-height:18.48px;color:#5c5c5c;">$20 -</div>
<div class="t" style="left:294px;top:974.09px;font-size:13.2px;line-height:18.48px;color:#5c5c5c;">UK</div>
<div class="t" style="left:294px;top:992.49px;font-size:13.2px;line-height:18.48px;color:#5c5c5c;">London</div>
<div class="t" style="left:357px;top:974.09px;font-size:13.2px;line-height:18.48px;color:#5c5c5c;">100.0000</div>
<div class="t" style="left:437px;top:974.09px;font-size:13.2px;line-height:18.48px;color:#5c5c5c;">1</div>
<div class="r" style="left:517px;top:934.9px;width:15px;height:15px;border:1px solid #ccc;border-radius:50%;box-sizing:border-box;background:#fff"></div>
<div class="t" style="left:517px;top:955.09px;font-size:13.2px;line-height:18.48px;color:#5c5c5c;">Percentage</div>
<div class="r" style="left:517px;top:984.7px;width:15px;height:15px;border:1px solid #ccc;border-radius:50%;box-sizing:border-box;background:#fff"></div>
<div class="r" style="left:521px;top:988.7px;width:7px;height:7px;border-radius:50%;background:#555"></div>
<div class="t" style="left:532px;top:986.09px;font-size:13.2px;line-height:18.48px;color:#5c5c5c;">Fix</div>
<div class="t" style="left:517px;top:1004.39px;font-size:13.2px;line-height:18.48px;color:#5c5c5c;">Amount</div>
<div class="t" style="left:602px;top:974.09px;font-size:13.2px;line-height:18.48px;color:#5c5c5c;">20.00</div>
<div class="t" style="left:656px;top:974.09px;font-size:13.2px;line-height:18.48px;color:#5c5c5c;">London</div>
<div class="t" style="left:719px;top:974.09px;font-size:13.2px;line-height:18.48px;color:#5c5c5c;">W12</div>
<div class="t" style="left:786px;top:964.89px;font-size:13.2px;line-height:18.48px;color:#5c5c5c;">United</div>
<div class="t" style="left:786px;top:983.29px;font-size:13.2px;line-height:18.48px;color:#5c5c5c;">Kingdom</div>
<div class="t" style="left:857px;top:964.89px;font-size:13.2px;line-height:18.48px;color:#5c5c5c;">Greater</div>
<div class="t" style="left:857px;top:983.29px;font-size:13.2px;line-height:18.48px;color:#5c5c5c;">London</div>
<div class="t" style="left:1029px;top:955.69px;font-size:13.2px;line-height:18.48px;color:#5c5c5c;">Default</div>
<div class="t" style="left:1029px;top:974.09px;font-size:13.2px;line-height:18.48px;color:#5c5c5c;">Student</div>
<div class="t" style="left:1029px;top:992.49px;font-size:13.2px;line-height:18.48px;color:#5c5c5c;">Wholesale</div>
<div class="t" style="left:1110px;top:964.89px;font-size:13.2px;line-height:18.48px;color:#5c5c5c;">Your</div>
<div class="t" style="left:1110px;top:983.29px;font-size:13.2px;line-height:18.48px;color:#5c5c5c;">Store</div>
<div class="r" style="left:264px;top:1090px;width:13px;height:13px;background:#fff;border:1px solid #d6d6d6;box-sizing:border-box;border-radius:1px"></div>
<div class="t" style="left:294px;top:1071.19px;font-size:13.2px;line-height:18.48px;color:#5c5c5c;">20% all</div>
<div class="t" style="left:294px;top:1089.59px;font-size:13.2px;line-height:18.48px;color:#5c5c5c;">over</div>
<div class="t" style="left:294px;top:1107.99px;font-size:13.2px;line-height:18.48px;color:#5c5c5c;">UK</div>
<div class="t" style="left:357px;top:1089.59px;font-size:13.2px;line-height:18.48px;color:#5c5c5c;">100.0000</div>
<div class="t" style="left:437px;top:1089.59px;font-size:13.2px;line-height:18.48px;color:#5c5c5c;">1</div>
<div class="r" style="left:517px;top:1050.4px;width:15px;height:15px;border:1px solid #ccc;border-radius:50%;box-sizing:border-box;background:#fff"></div>
<div class="r" style="left:521px;top:1054.4px;width:7px;height:7px;border-radius:50%;background:#555"></div>
<div class="t" style="left:517px;top:1070.59px;font-size:13.2px;line-height:18.48px;color:#5c5c5c;">Percentage</div>
<div class="r" style="left:517px;top:1100.2px;width:15px;height:15px;border:1px solid #ccc;border-radius:50%;box-sizing:border-box;background:#fff"></div>
<div class="t" style="left:532px;top:1101.59px;font-size:13.2px;line-height:18.48px;color:#5c5c5c;">Fix</div>
<div class="t" style="left:517px;top:1119.89px;font-size:13.2px;line-height:18.48px;color:#5c5c5c;">Amount</div>
<div class="t" style="left:602px;top:1089.59px;font-size:13.2px;line-height:18.48px;color:#5c5c5c;">20.00</div>
<div class="t" style="left:786px;top:1080.39px;font-size:13.2px;line-height:18.48px;color:#5c5c5c;">United</div>
<div class="t" style="left:786px;top:1098.79px;font-size:13.2px;line-height:18.48px;color:#5c5c5c;">Kingdom</div>
<div class="t" style="left:1029px;top:1071.19px;font-size:13.2px;line-height:18.48px;color:#5c5c5c;">Default</div>
<div class="t" style="left:1029px;top:1089.59px;font-size:13.2px;line-height:18.48px;color:#5c5c5c;">Student</div>
<div class="t" style="left:1029px;top:1107.99px;font-size:13.2px;line-height:18.48px;color:#5c5c5c;">Wholesale</div>
<div class="t" style="left:1110px;top:1080.39px;font-size:13.2px;line-height:18.48px;color:#5c5c5c;">Your</div>
<div class="t" style="left:1110px;top:1098.79px;font-size:13.2px;line-height:18.48px;color:#5c5c5c;">Store</div>
<div class="r" style="left:255px;top:1174px;width:892px;height:17px;background:#f1f1f1"></div>
<svg class="r" style="left:260px;top:1178px" width="6" height="9" viewBox="0 0 6 9"><path d="M5 0.5 L5 8.5 L1 4.5 Z" fill="#a3a3a3"/></svg>
<div class="r" style="left:272px;top:1176px;width:710px;height:13px;background:#c1c1c1"></div>
<div class="r" style="left:273px;top:941px;width:655px;height:205px;border:2px solid #f00;box-sizing:border-box"></div>
<div class="t" style="left:729.5px;top:885.47px;font-size:17.9px;line-height:25.06px;color:#f00;font-weight:bold;">lets check for UK</div>
<svg class="r" style="left:680px;top:896px" width="45" height="40" viewBox="0 0 45 40"><path d="M36 8 L14 27" stroke="#f00" stroke-width="2.2"/><path d="M8 34 L13 21 L20 29 Z" fill="#f00"/></svg>
<div class="r" style="left:7px;top:125px;width:127px;height:41px;border:2px solid #f00;box-sizing:border-box"></div>
<div class="r" style="left:4px;top:371px;width:188px;height:44px;border:2px solid #f00;box-sizing:border-box"></div>
</body></html>
